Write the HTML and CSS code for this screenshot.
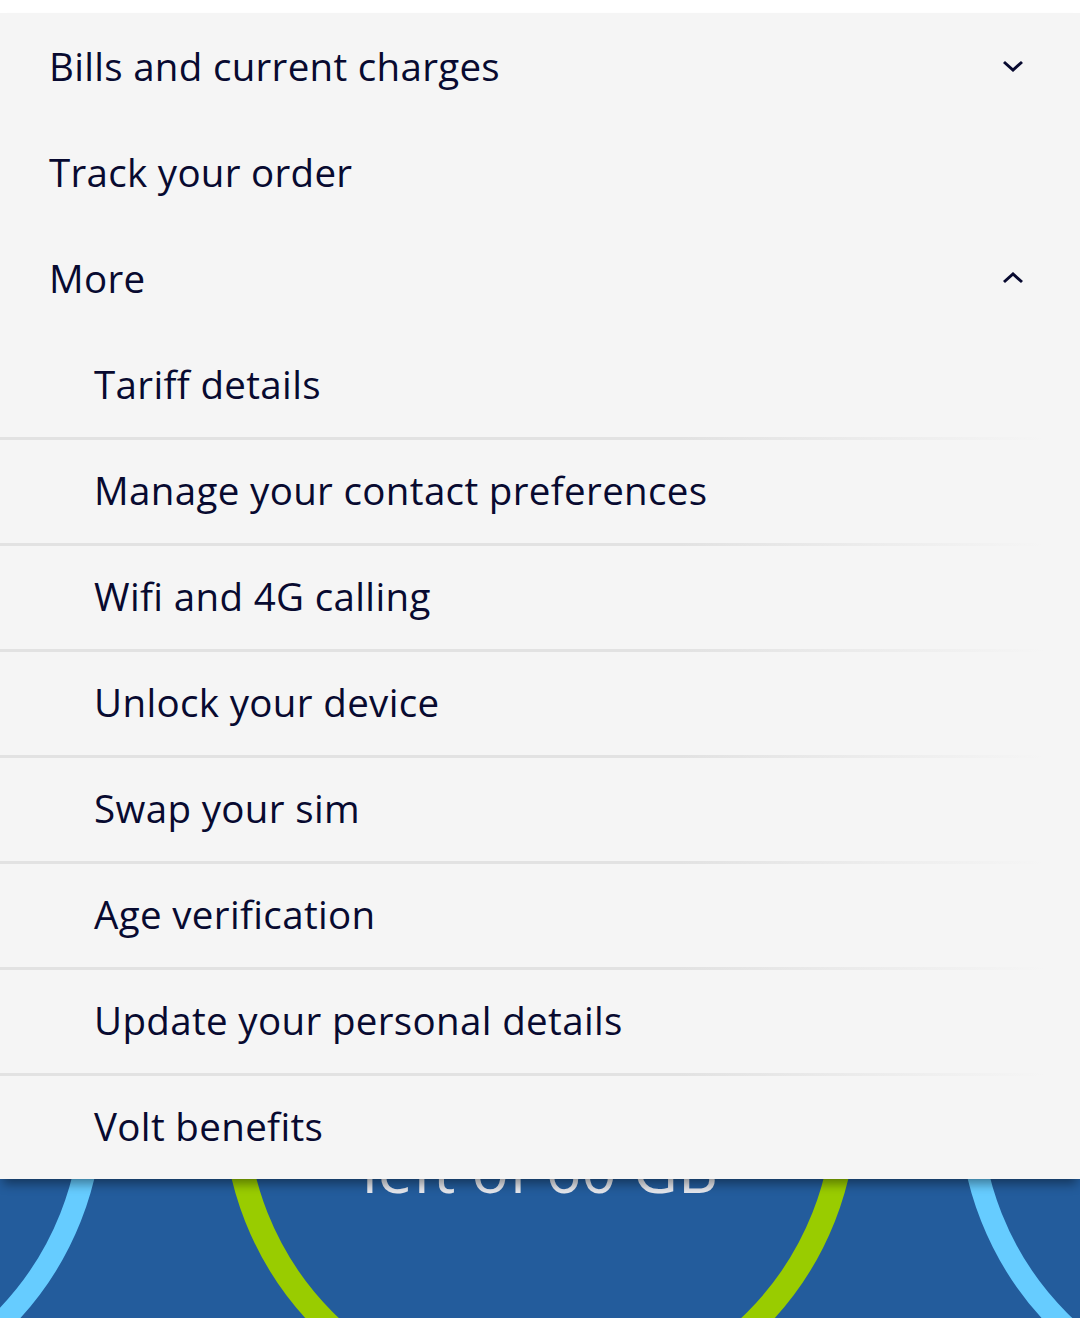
FILE: index.html
```html
<!DOCTYPE html>
<html lang="en">
<head>
<meta charset="utf-8">
<title>Menu</title>
<link rel="stylesheet" href="styles.css">
</head>
<body>
<header class="topbar"></header>
<main class="hero">
  <svg class="rings" viewBox="0 0 1080 1305" preserveAspectRatio="none" aria-hidden="true">
    <circle cx="-213" cy="1092" r="305" fill="none" stroke="#66ccff" stroke-width="22"/>
    <circle cx="540" cy="1092" r="305" fill="none" stroke="#99cc00" stroke-width="24"/>
    <circle cx="1275" cy="1092" r="305" fill="none" stroke="#66ccff" stroke-width="22"/>
  </svg>
  <div class="usage">
    <p class="usage-left">left of 60 GB</p>
  </div>
</main>

<nav class="menu">
  <ul class="menu-list">
    <li class="menu-item">
      <span>Bills and current charges</span>
      <svg class="chev" viewBox="0 0 22 12"><polyline points="2,2 11,10 20,2"/></svg>
    </li>
    <li class="menu-item"><span>Track your order</span></li>
    <li class="menu-item">
      <span>More</span>
      <svg class="chev" viewBox="0 0 22 12"><polyline points="2,10 11,2 20,10"/></svg>
    </li>
  </ul>
  <ul class="sub-list">
    <li class="sub-item">Tariff details</li>
    <li class="sub-item">Manage your contact preferences</li>
    <li class="sub-item">Wifi and 4G calling</li>
    <li class="sub-item">Unlock your device</li>
    <li class="sub-item">Swap your sim</li>
    <li class="sub-item">Age verification</li>
    <li class="sub-item">Update your personal details</li>
    <li class="sub-item">Volt benefits</li>
  </ul>
</nav>
</body>
</html>
```

FILE: styles.css
```css
* { box-sizing: border-box; }
html, body { margin: 0; padding: 0; }
body {
  width: 1080px;
  height: 1318px;
  overflow: hidden;
  position: relative;
  font-family: "Open Sans", "Noto Sans", sans-serif;
  background: #ffffff;
}
.topbar {
  height: 13px;
  background: #ffffff;
}
.hero {
  position: relative;
  height: 1305px;
  background: #235c9c;
  overflow: hidden;
}
.rings {
  position: absolute;
  inset: 0;
  width: 100%;
  height: 100%;
}
.usage {
  position: relative;
  display: flex;
  justify-content: center;
  padding-top: 1116px;
}
.usage-left {
  margin: 0;
  color: #e6e8ee;
  font-size: 62px;
  line-height: 80px;
}
.menu {
  position: absolute;
  top: 13px;
  left: 0;
  width: 1080px;
  background: #f5f5f5;
  box-shadow: 0 8px 10px -3px rgba(0, 0, 0, 0.4);
  color: #080a30;
}
.menu ul { list-style: none; margin: 0; padding: 0; }
.menu-item {
  height: 106px;
  display: flex;
  align-items: center;
  justify-content: space-between;
  padding: 0 56px 0 49px;
  font-size: 38.5px;
  letter-spacing: 0.3px;
}
.chev {
  width: 22px;
  height: 12px;
  fill: none;
  stroke: #080a30;
  stroke-width: 3;
}
.sub-item {
  position: relative;
  height: 106px;
  display: flex;
  align-items: center;
  padding-left: 94px;
  font-size: 38.5px;
  letter-spacing: 0.35px;
}
.sub-item + .sub-item::before {
  content: "";
  position: absolute;
  top: 0;
  left: 0;
  width: 1045px;
  height: 3px;
  background: linear-gradient(to right, #e2e2e2 0%, #e2e2e2 65%, rgba(226,226,226,0) 100%);
}
```
